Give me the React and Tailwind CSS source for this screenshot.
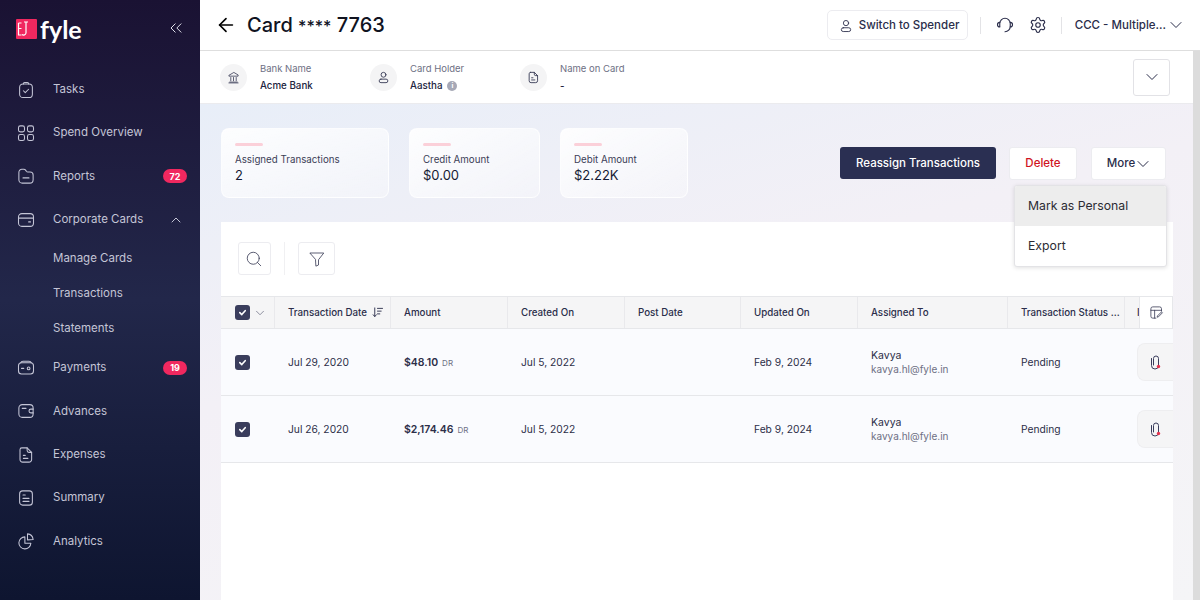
import React from "react";
import { ArrowLeft, ChevronDown, ChevronUp, ChevronsLeft, Search, Settings } from "lucide-react";

const S = ({ children, className = "", size = 18, vb = 24, sw = 1.6 }) => (
  <svg width={size} height={size} viewBox={`0 0 ${vb} ${vb}`} fill="none" stroke="currentColor" strokeWidth={sw} strokeLinecap="round" strokeLinejoin="round" className={className}>
    {children}
  </svg>
);

const icons = {
  tasks: <><rect x="3.500" y="4" width="17" height="18" rx="4.500" /><path d="M8.500 4V3.500A1.500 1.500 0 0 1 10 2h4a1.500 1.500 0 0 1 1.500 1.500V4" /><path d="M8.500 13l2.500 2.500 4.500-4.500" /></>,
  grid: <><rect x="2" y="2.500" width="8" height="8" rx="2.500" /><rect x="14" y="2.500" width="8" height="8" rx="2.500" /><rect x="2" y="14" width="8" height="8" rx="2.500" /><rect x="14" y="14" width="8" height="8" rx="2.500" /></>,
  reports: <><path d="M2.500 7a4 4 0 0 1 4-4h2.500c1.200 0 2 .5 2.700 1.500l.8 1.200c.5.700 1 1 2 1h3a4 4 0 0 1 4 4V17a4.500 4.500 0 0 1-4.500 4.500H7A4.500 4.500 0 0 1 2.500 17z" /><path d="M8 14.500h8" /></>,
  card: <><rect x="2" y="3.500" width="20" height="17" rx="4.500" /><path d="M2 9.500h20" /><path d="M15.500 14.500h2.500" /></>,
  pay: <><rect x="2" y="5" width="20" height="15" rx="4" /><path d="M5 5c.5-1.500 1.500-2 3-2h8c1.500 0 2.500.5 3 2" /><path d="M6 12.500h3" /><circle cx="15.500" cy="12.500" r="1.800" /></>,
  adv: <><rect x="2.500" y="3.500" width="19" height="17" rx="4.500" /><path d="M7 8.500h5" /><path d="M21.500 9.500h-3a2.500 2.500 0 0 0 0 5h3" /></>,
  exp: <><path d="M6.500 2.500h7l6 6V18a3.500 3.500 0 0 1-3.500 3.500H7.500A3.500 3.500 0 0 1 4 18V5a2.500 2.500 0 0 1 2.500-2.500z" /><path d="M13.500 2.500V6a2.500 2.500 0 0 0 2.500 2.500h3.500" /><path d="M8.500 12.500h2.500M8.500 16.500h6" /></>,
  sum: <><rect x="3.500" y="2.500" width="17" height="19" rx="4" /><path d="M8 8h3M8 12.500h8M8 16.500h8" /></>,
  pie: <><path d="M10.500 6.500A8 8 0 1 0 18.500 15h-8z" /><path d="M14 2.500c4 .3 7 3.300 7.500 7.500L14 10.500z" /></>,
};

const NavItem = ({ icon, label, badge, chevron }) => (
  <div className="h-[43.33px] flex items-center pl-[17px] pr-[13px] text-[#c4c5d6]">
    <S size={18} sw={1.400}>{icons[icon]}</S>
    <span className="ml-[18px] text-[11.5px]">{label}</span>
    {badge && <span className="ml-auto w-6 h-[14px] rounded-full bg-[#f0285f] text-white text-[9px] font-bold flex items-center justify-center">{badge}</span>}
    {chevron && <ChevronUp size={16} strokeWidth={1.500} className="ml-auto mr-[3px]" />}
  </div>
);

const Sub = ({ label }) => (
  <div className="h-[35px] flex items-center pl-[53px] text-[11.5px] text-[#c4c5d6]">{label}</div>
);

const Sidebar = () => (
  <aside className="w-[200px] shrink-0 h-full bg-gradient-to-b from-[#1a1233] via-[#22274a] to-[#0e1530]">
    <div className="h-[68px] flex items-start pl-[16px] pr-[14px] pt-[17px]">
      <svg width="21" height="20" viewBox="0 0 21 20" className="mt-[2px]">
        <rect width="21" height="20" fill="#f0285f" rx="1" />
        <path d="M2.500 4v12h3M2.500 4h3M2.500 9.500h3M8 3h4M10 3v11a2.500 2.500 0 0 1-4 1.500" fill="none" stroke="#fff" strokeWidth="1.200" />
      </svg>
      <span className="ml-[3px] -mt-[3px] text-[25px] leading-[30px] font-bold text-white font-['Lato',sans-serif]">fyle</span>
      <ChevronsLeft size={20} strokeWidth={1.200} className="ml-auto mt-[1px] text-[#dfe0ea]" />
    </div>
    <NavItem icon="tasks" label="Tasks" />
    <NavItem icon="grid" label="Spend Overview" />
    <NavItem icon="reports" label="Reports" badge="72" />
    <NavItem icon="card" label="Corporate Cards" chevron />
    <Sub label="Manage Cards" />
    <Sub label="Transactions" />
    <Sub label="Statements" />
    <NavItem icon="pay" label="Payments" badge="19" />
    <NavItem icon="adv" label="Advances" />
    <NavItem icon="exp" label="Expenses" />
    <NavItem icon="sum" label="Summary" />
    <NavItem icon="pie" label="Analytics" />
  </aside>
);

const Header = () => (
  <header className="h-[51px] shrink-0 bg-white border-b border-[#dedede] flex items-center pl-[15px] text-[#161b33]">
    <ArrowLeft size={22} strokeWidth={1.800} className="text-black" />
    <h1 className="ml-[10px] text-[20px] font-medium text-[#10131f] whitespace-nowrap">Card <span className="text-[16px]">****</span> 7763</h1>
    <button className="ml-auto h-[30px] w-[141px] border border-[#ececf0] rounded-[5px] flex items-center pl-[11px] pt-px text-[11.5px] font-medium text-[#2a2d4a]">
      <S size={14} sw={1.500}><circle cx="12" cy="7" r="4.500" /><rect x="4" y="15" width="16" height="6.500" rx="3.250" /></S>
      <span className="ml-[6px]">Switch to Spender</span>
    </button>
    <div className="ml-[12px] w-px h-[17px] bg-[#e3e3e6]" />
    <S size={18} className="ml-[15px] text-[#2a2d4a]" sw={1.500}><path d="M5 14V10a7 7 0 0 1 14 0v4a7 7 0 0 1-7 7" /><path d="M5 8.500a3 3 0 0 0 0 6M19 8.500a3 3 0 0 1 0 6" /></S>
    <Settings size={18} strokeWidth={1.500} className="ml-[15px] text-[#2a2d4a]" />
    <div className="ml-[14px] w-px h-[17px] bg-[#e3e3e6]" />
    <span className="ml-[13px] pt-[2px] text-[11.5px] font-medium text-[#2a2d4a] whitespace-nowrap">CCC - Multiple...</span>
    <ChevronDown size={20} strokeWidth={1.200} className="mr-[14px] text-[#2a2d4a]" />
  </header>
);

const InfoItem = ({ icon, label, value, info }) => (
  <div className="w-[150px] flex items-center">
    <div className="w-[27px] h-[27px] rounded-full bg-[#f4f4f5] flex items-center justify-center text-[#3b3e58]">{icon}</div>
    <div className="ml-[13px] flex flex-col">
      <span className="text-[9.500px] leading-[14px] text-[#6e7084]">{label}</span>
      <span className="mt-[3px] text-[9.750px] leading-[14px] font-medium text-[#20233d] flex items-center">
        {value}
        {info && <span className="ml-[5px] w-[10px] h-[10px] rounded-full bg-[#a6a8b6] text-white text-[7px] font-bold flex items-center justify-center">i</span>}
      </span>
    </div>
  </div>
);

const InfoStrip = () => (
  <div className="h-[53px] shrink-0 bg-white border-b border-[#ebebee] flex items-center pl-[20px] pr-[23px]">
    <InfoItem label="Bank Name" value="Acme Bank" icon={<S size={13} sw={1.500}><path d="M12 3 3.500 8v1.500h17V8zM5 20.500h14M3.500 22h17M7 12v6M12 12v6M17 12v6" /></S>} />
    <InfoItem label="Card Holder" value="Aastha" info icon={<S size={13} sw={1.700}><circle cx="12" cy="7" r="4.500" /><rect x="4" y="15" width="16" height="6.500" rx="3.250" /></S>} />
    <InfoItem label="Name on Card" value="-" icon={<S size={13} sw={1.700}>{icons.exp}</S>} />
    <button className="ml-auto w-[37px] h-[37px] border border-[#e2e2e6] rounded-[3px] flex items-center justify-center text-[#2a2d4a]">
      <ChevronDown size={20} strokeWidth={1.200} />
    </button>
  </div>
);

const Stat = ({ w, label, value }) => (
  <div className={`${w} h-[70px] rounded-[8px] border border-white/70 bg-gradient-to-br from-white/90 to-white/30 pl-[13px] pt-[14px]`}>
    <div className="w-[28px] h-[3px] rounded-full bg-[#fbd0d9]" />
    <div className="mt-[7px] text-[9.750px] leading-[14px] text-[#3b3d56]">{label}</div>
    <div className="text-[13px] leading-[17px] text-[#161b33]">{value}</div>
  </div>
);

const Check = () => (
  <span className="w-[15px] h-[15px] rounded-[3px] bg-[#3a3d5c] flex items-center justify-center">
    <svg width="9" height="9" viewBox="0 0 10 10" fill="none" stroke="#fff" strokeWidth="1.800" strokeLinecap="round" strokeLinejoin="round"><path d="M2 5.200 4.200 7.300 8 3" /></svg>
  </span>
);

const cols = "grid grid-cols-[53px_116px_117px_117px_116px_117px_150px_117px_49px]";

const HeadCell = ({ children, pad = "pl-[13px]" }) => (
  <div className={`h-full flex items-center pt-[2px] ${pad} border-l border-[#e9e9ec] text-[9.750px] font-medium text-[#2a2d4a] whitespace-nowrap overflow-hidden`}>{children}</div>
);

const Clip = () => (
  <svg width="13" height="15" viewBox="0 0 13 15" fill="none" stroke="#3a3d5c" strokeWidth="1" strokeLinecap="round">
    <path d="M2.500 3.500v7a3.500 3.500 0 0 0 7 0V3.500a2.500 2.500 0 0 0-5 0v6.500" />
    <circle cx="9.500" cy="11.500" r="1.700" fill="#e5344f" stroke="none" />
  </svg>
);

const Row = ({ date, amount }) => (
  <div className={`${cols} h-[67px] bg-[#fafbfe] border-b border-[#e6e7ea] items-center text-[10.250px] text-[#2c2e48]`}>
    <div className="pl-[14px]"><Check /></div>
    <div className="pl-[14px] pt-[2px]">{date}</div>
    <div className="pl-[14px] pt-[2px] flex items-center">
      <span className="font-semibold text-[10.500px]">{amount}</span>
      <span className="ml-[4px] text-[8px] text-[#6e7084]">DR</span>
    </div>
    <div className="pl-[14px] pt-[2px]">Jul 5, 2022</div>
    <div />
    <div className="pl-[14px] pt-[2px]">Feb 9, 2024</div>
    <div className="pl-[14px] flex flex-col">
      <span className="leading-[14px] text-[10.500px]">Kavya</span>
      <span className="leading-[13px] text-[10px] text-[#6e7084]">kavya.hl@fyle.in</span>
    </div>
    <div className="pl-[14px] pt-[2px]">Pending</div>
    <div className="pl-[13px]">
      <div className="w-[36px] h-[38px] rounded-l-[8px] bg-[#f5f5f6] border border-r-0 border-[#eeeef0] flex items-center justify-center">
        <Clip />
      </div>
    </div>
  </div>
);

const Table = () => (
  <div className="relative mt-[24px] ml-[21px] mr-[20px] flex-1 bg-white overflow-hidden">
    <div className="h-[74px] flex items-start pl-[17px] pt-[20px]">
      <button className="w-[33px] h-[33px] border border-[#ececf0] rounded-[3px] flex items-center justify-center text-[#3b3e58]">
        <Search size={18} strokeWidth={1.100} className="mr-[2px]" />
      </button>
      <div className="ml-[13px] w-px h-[33px] bg-[#f0f0f2]" />
      <button className="ml-[13px] w-[37px] h-[33px] border border-[#ececf0] rounded-[3px] flex items-center justify-center text-[#3b3e58]">
        <S size={18} sw={1.100}><path d="M3 4h18l-7 9v7l-3.500 1.500-.5-8.500z" /></S>
      </button>
    </div>
    <div className={`${cols} h-[33px] bg-[#f5f5f6] border-y border-[#e6e7ea] items-center`}>
      <div className="pl-[14px] flex items-center">
        <Check />
        <ChevronDown size={14} strokeWidth={1.300} className="ml-[3px] text-[#6e7084]" />
      </div>
      <HeadCell>Transaction Date<svg className="ml-[5px] -mt-[2px]" width="11" height="11" viewBox="0 0 12 12" fill="none" stroke="#2a2d4a" strokeWidth="1" strokeLinecap="round"><path d="M3 1v9M1.300 8.500 3 10.500 4.700 8.500M6 1.500h5.500M6 4.500h4M6 7.500h2.500" /></svg></HeadCell>
      <HeadCell>Amount</HeadCell>
      <HeadCell>Created On</HeadCell>
      <HeadCell>Post Date</HeadCell>
      <HeadCell>Updated On</HeadCell>
      <HeadCell>Assigned To</HeadCell>
      <HeadCell>Transaction Status ...</HeadCell>
      <HeadCell pad="pl-[12px]">I</HeadCell>
    </div>
    <Row date="Jul 29, 2020" amount="$48.10" />
    <Row date="Jul 26, 2020" amount="$2,174.46" />
    <div className="absolute right-0 top-[74px] w-[34px] h-[33px] bg-white border border-[#e6e7ea] flex items-center justify-center text-[#3b3e58]">
      <S size={15} sw={1.300}><path d="M20 10V6a3 3 0 0 0-3-3H6a3 3 0 0 0-3 3v12a3 3 0 0 0 3 3h5M3 8.500h17M9 8.500V21M21 13l-6 6-2 .5.500-2 6-6z" /></S>
    </div>
  </div>
);

const Menu = () => (
  <div className="absolute left-[814px] top-[134px] w-[153px] bg-white rounded-[3px] border border-[#e3e3e6] shadow-[0_1px_4px_rgba(0,0,0,0.12)] text-[12.250px] text-[#2b2b33] overflow-hidden">
    <div className="h-[40px] bg-[#ededed] flex items-center pl-[13px]">Mark as Personal</div>
    <div className="h-[40px] flex items-center pl-[13px]">Export</div>
  </div>
);

export default function App() {
  return (
    <div className="w-[1200px] h-[600px] overflow-hidden flex font-['Inter',sans-serif]">
      <Sidebar />
      <main className="flex-1 flex flex-col min-w-0 h-full">
        <Header />
        <div className="flex-1 min-h-0 flex">
          <div className="relative w-[993px] flex flex-col min-h-0">
            <InfoStrip />
            <div className="flex-1 min-h-0 flex flex-col bg-[linear-gradient(165deg,#e8eef8_0%,#f3f0f6_40%,#f5f5f7_100%)]">
              <div className="flex pt-[24px] pl-[21px] pr-[27px]">
                <Stat w="w-[168px]" label="Assigned Transactions" value="2" />
                <div className="ml-[20px]"><Stat w="w-[131px]" label="Credit Amount" value="$0.00" /></div>
                <div className="ml-[20px]"><Stat w="w-[128px]" label="Debit Amount" value="$2.22K" /></div>
                <div className="ml-auto pt-[19px] flex items-start">
                  <button className="w-[156px] h-[32px] pt-px bg-[#2a2f52] rounded-[3px] text-[11.500px] font-medium text-white">Reassign Transactions</button>
                  <button className="ml-[13px] w-[68px] h-[33px] pt-px bg-white border border-[#ececf0] rounded-[3px] text-[11.500px] font-medium text-[#cf1322]">Delete</button>
                  <button className="ml-[14px] w-[75px] h-[33px] pt-px bg-white border border-[#ececf0] rounded-[3px] text-[11.500px] font-medium text-[#2a2d4a] flex items-center justify-center">More<ChevronDown size={20} strokeWidth={1.200} className="-ml-[2px] -mr-[3px]" /></button>
                </div>
              </div>
              <Table />
            </div>
            <Menu />
          </div>
          <div className="w-[7px] bg-[#dcdcdc]" />
        </div>
      </main>
    </div>
  );
}
